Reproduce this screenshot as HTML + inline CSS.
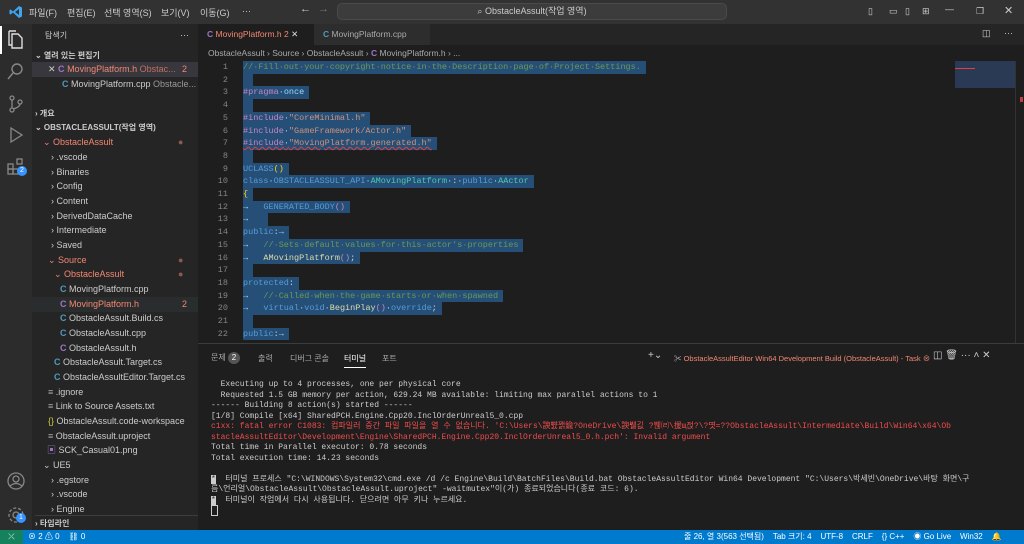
<!DOCTYPE html>
<html><head><meta charset="utf-8"><style>
*{margin:0;padding:0;box-sizing:border-box}
body{width:1024px;height:544px;overflow:hidden;background:#1e1e1e;font-family:"Liberation Sans","Noto Sans CJK KR",sans-serif;font-size:9px;color:#ccc;position:relative}
.abs{position:absolute}
#title{left:0;top:0;width:1024px;height:24px;background:#323233}
#title .m{position:absolute;top:6px;font-size:9px;color:#ccc}
#search{left:337px;top:3px;width:390px;height:17px;background:#3c3c3c;border:1px solid #4a4a4a;border-radius:5px;text-align:center;line-height:15px;color:#ccc;font-size:9px}
#act{left:0;top:24px;width:32px;height:506px;background:#2c2c2c}
#side{left:32px;top:24px;width:166px;height:506px;background:#252526}
.row{position:absolute;left:0;width:166px;height:15px;line-height:15px;white-space:nowrap;font-size:9px;color:#ccc}
.red{color:#f48771}
.ci{color:#a074c4;font-weight:bold}
.cp{color:#519aba;font-weight:bold}
#tabs{left:198px;top:24px;width:826px;height:21px;background:#252526}
#bc{left:198px;top:45px;width:826px;height:17px;background:#1e1e1e;font-size:8.5px;color:#aaa;line-height:17px;padding-left:10px}
.code{position:absolute;left:198px;font-family:"Liberation Mono",monospace;font-size:8.5px;white-space:pre;height:12.7px;line-height:12.7px}
.ln{position:absolute;left:0;width:30px;text-align:right;color:#858585}
.tx{position:absolute;left:45px;background:#264f78;color:#9cdcfe;padding-right:5px}
.cm{color:#6a9955}.kw{color:#569cd6}.pp{color:#c586c0}.st{color:#ce9178}.ty{color:#4ec9b0}.fn{color:#dcdcaa}.pu{color:#ffd700}.w{color:#d4d4d4}
#panel{left:198px;top:343px;width:826px;height:187px;background:#1e1e1e;border-top:1px solid #3c3c3c}
.t{position:absolute;left:13px;font-family:"Liberation Mono","Noto Sans CJK KR",monospace;font-size:8px;white-space:pre;color:#ccc;line-height:10.5px}
#status{left:0;top:530px;width:1024px;height:14px;background:#007acc;color:#fff;font-size:8px;line-height:14px}
</style></head><body>
<div id="title" class="abs">
<svg class="abs" style="left:9px;top:5px" width="14" height="14" viewBox="0 0 14 14"><path d="M10 1 L13 2.5 V11.5 L10 13 L4 7.5 L1.5 9.5 L0.5 9 V5 L1.5 4.5 L4 6.5 Z M10 4 L6 7 L10 10Z" fill="#3ea6f0" fill-rule="evenodd"/></svg>
<span class="m" style="left:29px">파일(F)</span><span class="m" style="left:67px">편집(E)</span><span class="m" style="left:104px">선택 영역(S)</span><span class="m" style="left:161px">보기(V)</span><span class="m" style="left:200px">이동(G)</span><span class="m" style="left:242px">···</span>
<span class="m" style="left:300px;font-size:11px;top:3px">←</span><span class="m" style="left:318px;font-size:11px;top:3px;color:#777">→</span>
<span class="m" style="left:868px;color:#ccc">▯</span><span class="m" style="left:889px">▭</span><span class="m" style="left:905px">▯</span><span class="m" style="left:922px">⊞</span>
<span class="m" style="left:945px;top:4px">—</span><span class="m" style="left:976px">❐</span><span class="m" style="left:1004px;font-size:11px;top:4px">✕</span>
</div>
<div id="search" class="abs">⌕ ObstacleAssult(작업 영역)</div>
<div id="act" class="abs">
<div class="abs" style="left:0;top:2px;width:2px;height:28px;background:#fff"></div>
<svg class="abs" style="left:7px;top:6px" width="18" height="20" viewBox="0 0 18 20" fill="none" stroke="#ddd" stroke-width="1.4"><path d="M5 4 H11 L15 8 V18 H5Z M2 1 H9 M2 1 V15 H5"/></svg>
<svg class="abs" style="left:7px;top:38px" width="18" height="18" fill="none" stroke="#888" stroke-width="1.4"><circle cx="10" cy="7" r="5"/><path d="M6 11 L1 17"/></svg>
<svg class="abs" style="left:7px;top:70px" width="18" height="20" fill="none" stroke="#888" stroke-width="1.3"><circle cx="5" cy="4" r="2"/><circle cx="5" cy="16" r="2"/><circle cx="13" cy="8" r="2"/><path d="M5 6 V14 M13 10 Q13 13 6 15"/></svg>
<svg class="abs" style="left:7px;top:102px" width="18" height="18" fill="none" stroke="#888" stroke-width="1.3"><path d="M4 2 L15 9 L4 16Z"/></svg>
<svg class="abs" style="left:7px;top:134px" width="18" height="18" fill="none" stroke="#888" stroke-width="1.3"><rect x="1" y="6" width="5" height="5"/><rect x="1" y="11" width="5" height="5"/><rect x="6" y="11" width="5" height="5"/><rect x="10" y="1" width="5" height="5"/></svg>
<div class="abs" style="left:17px;top:142px;width:10px;height:10px;border-radius:5px;background:#3794ff;color:#fff;font-size:7px;text-align:center;line-height:10px">2</div>
<svg class="abs" style="left:6px;top:447px" width="20" height="20" fill="none" stroke="#888" stroke-width="1.3"><circle cx="10" cy="10" r="8"/><circle cx="10" cy="8" r="3"/><path d="M4 15 Q10 10 16 15"/></svg>
<svg class="abs" style="left:6px;top:481px" width="20" height="20" fill="none" stroke="#888" stroke-width="1.3"><circle cx="10" cy="10" r="3"/><circle cx="10" cy="10" r="7" stroke-dasharray="3 2"/></svg>
<div class="abs" style="left:16px;top:489px;width:10px;height:10px;border-radius:5px;background:#3794ff;color:#fff;font-size:7px;text-align:center;line-height:10px">1</div>
</div>
<div id="side" class="abs">
<div class="row" style="top:4px;left:13px;font-size:8px">탐색기</div><div class="row" style="top:4px;left:148px;width:20px">···</div>
<div class="row" style="top:24px;left:3px;font-weight:bold;font-size:8px">⌄ 열려 있는 편집기</div>
<div class="row" style="top:38px;background:#37373d;padding-left:16px">✕ <span class="ci">C</span> <span class="red">MovingPlatform.h</span> <span style="color:#c07060">Obstac...</span> <span class="red" style="position:absolute;left:150px">2</span></div>
<div class="row" style="top:53px;padding-left:30px"><span class="cp">C</span> MovingPlatform.cpp <span style="color:#999">Obstacle...</span></div>
<div class="row" style="top:82px;left:3px;font-weight:bold;font-size:8px">› 개요</div>
<div class="row" style="top:96px;left:3px;font-weight:bold;font-size:8px">⌄ OBSTACLEASSULT(작업 영역)</div>
<div class="row red" style="top:111px;padding-left:11px">⌄ ObstacleAssult<span style="position:absolute;left:146px;color:#8a5a50">●</span></div>
<div class="row" style="top:126px;padding-left:19px">› .vscode</div>
<div class="row" style="top:141px;padding-left:19px">› Binaries</div>
<div class="row" style="top:155px;padding-left:19px">› Config</div>
<div class="row" style="top:170px;padding-left:19px">› Content</div>
<div class="row" style="top:185px;padding-left:19px">› DerivedDataCache</div>
<div class="row" style="top:199px;padding-left:19px">› Intermediate</div>
<div class="row" style="top:214px;padding-left:19px">› Saved</div>
<div class="row red" style="top:229px;padding-left:16px">⌄ Source<span style="position:absolute;left:146px;color:#8a5a50">●</span></div>
<div class="row red" style="top:243px;padding-left:22px">⌄ ObstacleAssult<span style="position:absolute;left:146px;color:#8a5a50">●</span></div>
<div class="row" style="top:258px;padding-left:28px"><span class="cp">C</span> MovingPlatform.cpp</div>
<div class="row" style="top:273px;padding-left:28px;background:#2a2d2e"><span class="ci">C</span> <span class="red">MovingPlatform.h</span><span class="red" style="position:absolute;left:150px">2</span></div>
<div class="row" style="top:287px;padding-left:28px"><span class="cp">C</span> ObstacleAssult.Build.cs</div>
<div class="row" style="top:302px;padding-left:28px"><span class="cp">C</span> ObstacleAssult.cpp</div>
<div class="row" style="top:317px;padding-left:28px"><span class="ci">C</span> ObstacleAssult.h</div>
<div class="row" style="top:331px;padding-left:22px"><span class="cp">C</span> ObstacleAssult.Target.cs</div>
<div class="row" style="top:346px;padding-left:22px"><span class="cp">C</span> ObstacleAssultEditor.Target.cs</div>
<div class="row" style="top:361px;padding-left:16px"><span style="color:#aaa">≡</span> .ignore</div>
<div class="row" style="top:375px;padding-left:16px"><span style="color:#aaa">≡</span> Link to Source Assets.txt</div>
<div class="row" style="top:390px;padding-left:16px"><span style="color:#cbcb41">{}</span> ObstacleAssult.code-workspace</div>
<div class="row" style="top:405px;padding-left:16px"><span style="color:#aaa">≡</span> ObstacleAssult.uproject</div>
<div class="row" style="top:419px;padding-left:15px"><span style="color:#a074c4">▣</span> SCK_Casual01.png</div>
<div class="row" style="top:434px;padding-left:11px">⌄ UE5</div>
<div class="row" style="top:449px;padding-left:19px">› .egstore</div>
<div class="row" style="top:463px;padding-left:19px">› .vscode</div>
<div class="row" style="top:478px;padding-left:19px">› Engine</div>
<div class="row" style="top:491px;left:3px;font-weight:bold;font-size:8px;border-top:1px solid #3c3c3c">› 타임라인</div>
</div>
<div id="tabs" class="abs">
<div class="abs" style="left:0;top:0;width:116px;height:21px;background:#1e1e1e;line-height:21px;padding-left:9px;font-size:8.5px"><span class="ci">C</span> <span class="red">MovingPlatform.h</span> <span class="red">2</span> <span style="color:#ddd">✕</span></div>
<div class="abs" style="left:116px;top:0;width:116px;height:21px;background:#2d2d2d;line-height:21px;padding-left:9px;font-size:8.5px;color:#aaa"><span class="cp">C</span> MovingPlatform.cpp</div>
<div class="abs" style="left:784px;top:4px;color:#ccc">◫</div><div class="abs" style="left:806px;top:4px;color:#ccc">···</div>
</div>
<div id="bc" class="abs">ObstacleAssult › Source › ObstacleAssult › <span class="ci">C</span> MovingPlatform.h › ...</div>
<div class="abs" style="left:955px;top:61px;width:60px;height:27px;background:#2a3a55"></div>
<div class="abs" style="left:955px;top:68px;width:20px;height:1px;background:#e04040"></div>
<div class="abs" style="left:1015px;top:61px;width:1px;height:282px;background:#333"></div>
<div class="abs" style="left:1020px;top:97px;width:3px;height:5px;background:#c04040"></div>

<div class="code" style="top:61px"><span class="ln">1</span><span class="tx cm">//·Fill·out·your·copyright·notice·in·the·Description·page·of·Project·Settings.</span></div>
<div class="code" style="top:73.7px"><span class="ln">2</span><span class="tx"> </span></div>
<div class="code" style="top:86.4px"><span class="ln">3</span><span class="tx"><span class="pp">#pragma</span>·once</span></div>
<div class="code" style="top:99.1px"><span class="ln">4</span><span class="tx"> </span></div>
<div class="code" style="top:111.8px"><span class="ln">5</span><span class="tx"><span class="pp">#include</span>·<span class="st">"CoreMinimal.h"</span></span></div>
<div class="code" style="top:124.5px"><span class="ln">6</span><span class="tx"><span class="pp">#include</span>·<span class="st">"GameFramework/Actor.h"</span></span></div>
<div class="code" style="top:137.2px"><span class="ln">7</span><span class="tx" style="text-decoration:underline wavy #e04040"><span class="pp">#include</span>·<span class="st">"MovingPlatform.generated.h"</span></span></div>
<div class="code" style="top:149.9px"><span class="ln">8</span><span class="tx"> </span></div>
<div class="code" style="top:162.6px"><span class="ln">9</span><span class="tx kw">UCLASS<span class="pu">()</span></span></div>
<div class="code" style="top:175.3px"><span class="ln">10</span><span class="tx"><span class="kw">class</span>·<span class="kw">OBSTACLEASSULT_API</span>·<span class="ty">AMovingPlatform</span>·<span class="w">:</span>·<span class="kw">public</span>·<span class="ty">AActor</span></span></div>
<div class="code" style="top:188px"><span class="ln">11</span><span class="tx pu">{</span></div>
<div class="code" style="top:200.7px"><span class="ln">12</span><span class="tx">→   <span class="kw">GENERATED_BODY</span><span class="pp">()</span></span></div>
<div class="code" style="top:213.4px"><span class="ln">13</span><span class="tx">→   </span></div>
<div class="code" style="top:226.1px"><span class="ln">14</span><span class="tx"><span class="kw">public</span><span class="w">:</span>→</span></div>
<div class="code" style="top:238.8px"><span class="ln">15</span><span class="tx">→   <span class="cm">//·Sets·default·values·for·this·actor's·properties</span></span></div>
<div class="code" style="top:251.5px"><span class="ln">16</span><span class="tx">→   <span class="fn">AMovingPlatform</span><span class="pp">()</span><span class="w">;</span></span></div>
<div class="code" style="top:264.2px"><span class="ln">17</span><span class="tx"> </span></div>
<div class="code" style="top:276.9px"><span class="ln">18</span><span class="tx"><span class="kw">protected</span><span class="w">:</span></span></div>
<div class="code" style="top:289.6px"><span class="ln">19</span><span class="tx">→   <span class="cm">//·Called·when·the·game·starts·or·when·spawned</span></span></div>
<div class="code" style="top:302.3px"><span class="ln">20</span><span class="tx">→   <span class="kw">virtual</span>·<span class="kw">void</span>·<span class="fn">BeginPlay</span><span class="pp">()</span>·<span class="kw">override</span><span class="w">;</span></span></div>
<div class="code" style="top:315px"><span class="ln">21</span><span class="tx"> </span></div>
<div class="code" style="top:327.7px"><span class="ln">22</span><span class="tx"><span class="kw">public</span><span class="w">:</span>→</span></div>

<div id="panel" class="abs">
<div class="abs" style="left:13px;top:8px;font-size:8px;color:#aaa">문제 <span style="display:inline-block;width:12px;height:12px;border-radius:6px;background:#555;color:#fff;text-align:center;line-height:12px">2</span></div>
<div class="abs" style="left:60px;top:9px;font-size:8px;color:#aaa">출력</div>
<div class="abs" style="left:92px;top:9px;font-size:8px;color:#aaa">디버그 콘솔</div>
<div class="abs" style="left:146px;top:9px;font-size:8px;color:#fff;border-bottom:1px solid #fff;padding-bottom:3px">터미널</div>
<div class="abs" style="left:184px;top:9px;font-size:8px;color:#aaa">포트</div>
<div class="abs" style="left:450px;top:6px;font-size:10px;color:#ccc">+⌄</div>
<div class="abs" style="left:476px;top:9px;font-size:7.5px;color:#f48771;white-space:nowrap"><span style="color:#ccc">✂</span> ObstacleAssultEditor Win64 Development Build (ObstacleAssult) - Task ⊗</div>
<div class="abs" style="left:735px;top:6px;font-size:10px;color:#ccc;white-space:nowrap">◫ 🗑 ··· ˄ ✕</div>
<div class="t" style="top:36px">  Executing up to 4 processes, one per physical core
  Requested 1.5 GB memory per action, 629.24 MB available: limiting max parallel actions to 1
------ Building 8 action(s) started ------
[1/8] Compile [x64] SharedPCH.Engine.Cpp20.InclOrderUnreal5_0.cpp
<span style="color:#f14c4c">c1xx: fatal error C1083: 컴파일러 중간 파일 파일을 열 수 없습니다. 'C:\Users\諛뺤꽭鍮?OneDrive\諛뷀깂 ?붾㈃\援щ젅?\?몃=??ObstacleAssult\Intermediate\Build\Win64\x64\Ob
stacleAssultEditor\Development\Engine\SharedPCH.Engine.Cpp20.InclOrderUnreal5_0.h.pch': Invalid argument</span>
Total time in Parallel executor: 0.78 seconds
Total execution time: 14.23 seconds

<span style="background:#ccc;color:#333">*</span>  터미널 프로세스 "C:\WINDOWS\System32\cmd.exe /d /c Engine\Build\BatchFiles\Build.bat ObstacleAssultEditor Win64 Development "C:\Users\박세빈\OneDrive\바탕 화면\구
름\언리얼\ObstacleAssult\ObstacleAssult.uproject" -waitmutex"이(가) 종료되었습니다(종료 코드: 6).
<span style="background:#ccc;color:#333">*</span>  터미널이 작업에서 다시 사용됩니다. 닫으려면 아무 키나 누르세요.
<span style="border:1px solid #ccc">&nbsp;</span></div>
</div>
<div id="status" class="abs">
<div class="abs" style="left:0;top:0;width:23px;height:14px;background:#16825d;text-align:center">⤫</div>
<div class="abs" style="left:28px">⊗ 2 ⚠ 0 &nbsp;&nbsp; ⛓ 0</div>
<div class="abs" style="left:684px;white-space:nowrap">줄 26, 열 3(563 선택됨) &nbsp;&nbsp; Tab 크기: 4 &nbsp;&nbsp; UTF-8 &nbsp;&nbsp; CRLF &nbsp;&nbsp; {} C++ &nbsp;&nbsp; ◉ Go Live &nbsp;&nbsp; Win32 &nbsp;&nbsp; 🔔</div>
</div>
</body></html>
